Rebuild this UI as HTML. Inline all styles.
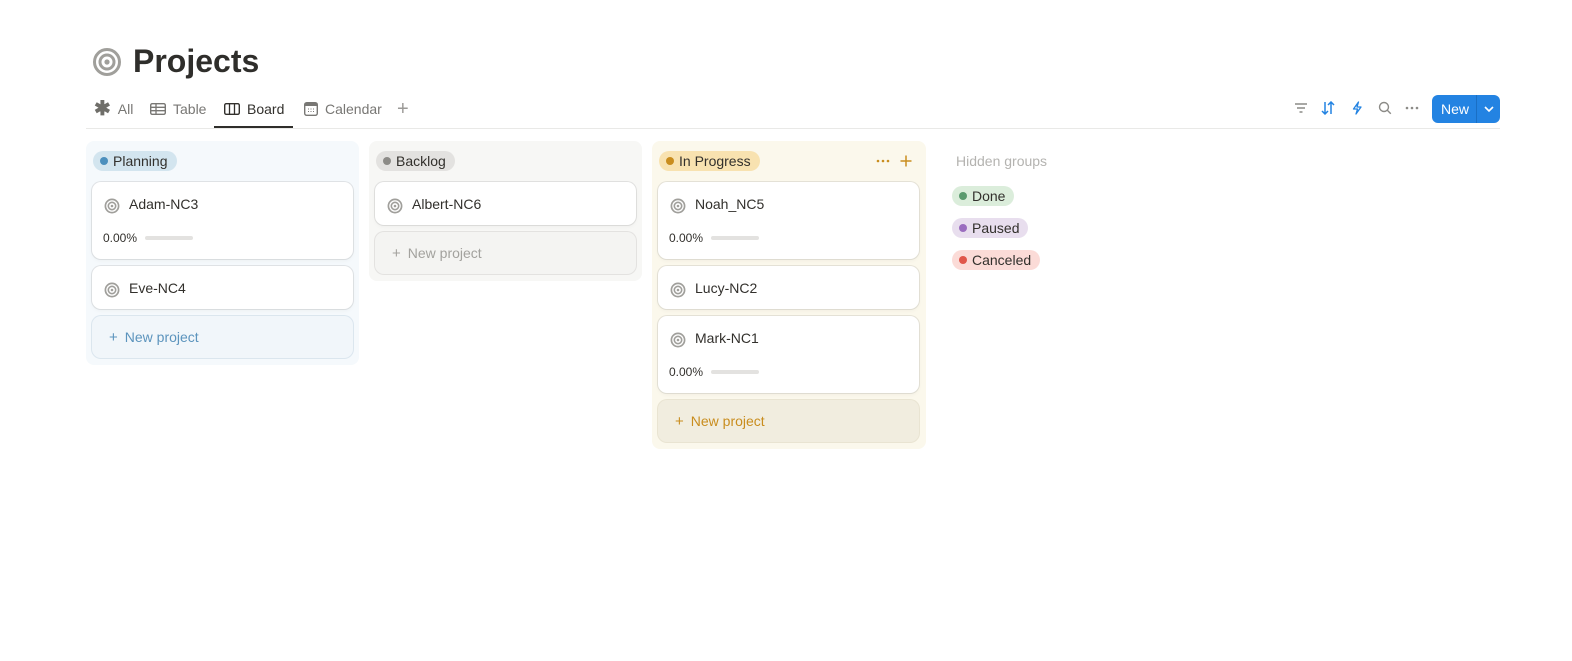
<!DOCTYPE html>
<html><head><meta charset="utf-8"><style>
*{box-sizing:border-box;margin:0;padding:0}
body{width:1572px;height:661px;background:#fff;font-family:"Liberation Sans",sans-serif;color:#37352f;position:relative;overflow:hidden}
.abs{position:absolute}
h1{position:absolute;left:133px;top:43px;font-size:32px;font-weight:700;color:#2f2e2b}
.tab{position:absolute;top:101px;font-size:14px;color:#787774;display:flex;align-items:center;gap:7px}
.col{position:absolute;border-radius:8px}
.pill{position:absolute;height:20px;border-radius:10px;font-size:14px;display:flex;align-items:center;padding:0 9px 0 7px;gap:5px;color:#32302c}
.pill i{width:8px;height:8px;border-radius:50%;display:block}
.card{position:absolute;background:#fff;border-radius:9px;box-shadow:0 0 0 1px rgba(15,15,15,.09),0 2px 4px rgba(15,15,15,.04);width:261px}
.card .t{position:absolute;left:37px;top:14px;font-size:14px;color:#32302c}
.card svg{position:absolute;left:12px;top:16px}
.pct{position:absolute;left:11px;font-size:12px;color:#32302c;display:flex;align-items:center;gap:8px}
.pct b{display:block;width:48px;height:4px;border-radius:2px;background:#e3e2e0}
.newp{position:absolute;width:261px;height:42px;border-radius:9px;font-size:14px;display:flex;align-items:center;padding-left:17px;gap:7px}
.newp span{font-size:15px}
</style></head><body>
<svg class="abs" style="left:92px;top:47px" width="30" height="30" viewBox="0 0 30 30"><circle cx="15" cy="15" r="12.5" fill="none" stroke="#a09f9b" stroke-width="3"/><circle cx="15" cy="15" r="7" fill="none" stroke="#a09f9b" stroke-width="3"/><circle cx="15" cy="15" r="2.6" fill="#a09f9b"/></svg>
<h1>Projects</h1>
<div class="tab" style="left:94px"><span style="font-size:20px;color:#6f6e69;font-weight:700;line-height:14px">✱</span>All</div>
<div class="tab" style="left:150px"><svg width="16" height="12" viewBox="0 0 16 12"><rect x="0.7" y="0.7" width="14.6" height="10.6" rx="1.5" fill="none" stroke="#787774" stroke-width="1.4"/><path d="M1 4.3h14M1 7.7h14M6 1v10" stroke="#787774" stroke-width="1.3"/></svg>Table</div>
<div class="tab" style="left:224px;color:#32302c"><svg width="16" height="12" viewBox="0 0 16 12"><rect x="0.7" y="0.7" width="14.6" height="10.6" rx="1.5" fill="none" stroke="#32302c" stroke-width="1.4"/><path d="M5.5 1v10M10.5 1v10" stroke="#32302c" stroke-width="1.3"/></svg>Board</div>
<div class="abs" style="left:214px;top:126px;width:79px;height:2px;background:#2f2e2b"></div>
<div class="tab" style="left:304px"><svg width="14" height="14" viewBox="0 0 14 14"><rect x="0.7" y="0.7" width="12.6" height="12.6" rx="2" fill="none" stroke="#787774" stroke-width="1.4"/><rect x="1" y="1" width="12" height="3" fill="#787774"/><path d="M4 7h1M6.5 7h1M9 7h1M4 9.5h1M6.5 9.5h1M9 9.5h1" stroke="#787774" stroke-width="1"/></svg>Calendar</div>
<div class="tab" style="left:397px;font-size:20px;top:98px;color:#9b9a97">+</div>
<div class="abs" style="left:86px;top:128px;width:1414px;height:1px;background:#e9e9e7"></div>
<svg class="abs" style="left:1294px;top:102px" width="14" height="12" viewBox="0 0 14 12"><path d="M1 2h12M3 6h8M5.5 10h3" stroke="#8c8b87" stroke-width="1.4"/></svg>
<svg class="abs" style="left:1321px;top:101px" width="14" height="14" viewBox="0 0 14 14"><path d="M4 1v12M1 10l3 3 3-3M10 13V1M7 4l3-3 3 3" stroke="#2383e2" stroke-width="1.5" fill="none"/></svg>
<svg class="abs" style="left:1351px;top:101px" width="12" height="14" viewBox="0 0 12 14"><path d="M7.5 1L2.5 8h4l-1.5 5 5-7h-4z" stroke="#2383e2" stroke-width="1.3" fill="none" stroke-linejoin="round"/></svg>
<svg class="abs" style="left:1378px;top:101px" width="14" height="14" viewBox="0 0 14 14"><circle cx="6" cy="6" r="4.5" stroke="#8c8b87" stroke-width="1.4" fill="none"/><path d="M9.3 9.3l3.5 3.5" stroke="#8c8b87" stroke-width="1.4"/></svg>
<svg class="abs" style="left:1405px;top:106px" width="14" height="4" viewBox="0 0 14 4"><circle cx="2" cy="2" r="1.3" fill="#8c8b87"/><circle cx="7" cy="2" r="1.3" fill="#8c8b87"/><circle cx="12" cy="2" r="1.3" fill="#8c8b87"/></svg>
<div class="abs" style="left:1432px;top:95px;width:68px;height:28px;background:#2383e2;border-radius:6px;color:#fff;font-size:14px;display:flex;align-items:center"><span style="padding-left:9px;width:44px">New</span><span style="width:1px;height:28px;background:#1a6fc4"></span><svg style="margin-left:6px" width="12" height="8" viewBox="0 0 12 8"><path d="M2 2l4 4 4-4" stroke="#fff" stroke-width="1.6" fill="none"/></svg></div>

<div class="col" style="left:86px;top:141px;width:273px;height:224px;background:#f5f9fc"></div>
<div class="pill" style="left:93px;top:151px;background:#d3e5ef"><i style="background:#4c8fbd"></i>Planning</div>
<div class="card" style="left:92px;top:182px;height:77px"><svg width="16" height="16" viewBox="0 0 16 16"><circle cx="8" cy="8" r="6.6" fill="none" stroke="#a09f9b" stroke-width="1.7"/><circle cx="8" cy="8" r="3.7" fill="none" stroke="#a09f9b" stroke-width="1.6"/><circle cx="8" cy="8" r="1.3" fill="#a09f9b"/></svg><div class="t">Adam-NC3</div><div class="pct" style="top:49px">0.00%<b></b></div></div>
<div class="card" style="left:92px;top:266px;height:43px"><svg width="16" height="16" viewBox="0 0 16 16"><circle cx="8" cy="8" r="6.6" fill="none" stroke="#a09f9b" stroke-width="1.7"/><circle cx="8" cy="8" r="3.7" fill="none" stroke="#a09f9b" stroke-width="1.6"/><circle cx="8" cy="8" r="1.3" fill="#a09f9b"/></svg><div class="t">Eve-NC4</div></div>
<div class="newp" style="left:92px;top:316px;background:#f1f6fa;box-shadow:0 0 0 1px #dbe6ee;color:#5c94bd"><span>+</span>New project</div>

<div class="col" style="left:369px;top:141px;width:273px;height:140px;background:#f7f7f5"></div>
<div class="pill" style="left:376px;top:151px;background:#e3e2e0"><i style="background:#8c8b87"></i>Backlog</div>
<div class="card" style="left:375px;top:182px;height:43px"><svg width="16" height="16" viewBox="0 0 16 16"><circle cx="8" cy="8" r="6.6" fill="none" stroke="#a09f9b" stroke-width="1.7"/><circle cx="8" cy="8" r="3.7" fill="none" stroke="#a09f9b" stroke-width="1.6"/><circle cx="8" cy="8" r="1.3" fill="#a09f9b"/></svg><div class="t">Albert-NC6</div></div>
<div class="newp" style="left:375px;top:232px;background:#f4f4f2;box-shadow:0 0 0 1px #e3e2e0;color:#a3a29e"><span>+</span>New project</div>

<div class="col" style="left:652px;top:141px;width:274px;height:308px;background:#fbf8ec"></div>
<div class="pill" style="left:659px;top:151px;background:#f8e2b0"><i style="background:#c98d1e"></i>In Progress</div>
<svg class="abs" style="left:876px;top:159px" width="14" height="4" viewBox="0 0 14 4"><circle cx="2" cy="2" r="1.3" fill="#c98d1e"/><circle cx="7" cy="2" r="1.3" fill="#c98d1e"/><circle cx="12" cy="2" r="1.3" fill="#c98d1e"/></svg>
<svg class="abs" style="left:900px;top:155px" width="12" height="12" viewBox="0 0 12 12"><path d="M6 0.5v11M0.5 6h11" stroke="#c98d1e" stroke-width="1.5"/></svg>
<div class="card" style="left:658px;top:182px;height:77px"><svg width="16" height="16" viewBox="0 0 16 16"><circle cx="8" cy="8" r="6.6" fill="none" stroke="#a09f9b" stroke-width="1.7"/><circle cx="8" cy="8" r="3.7" fill="none" stroke="#a09f9b" stroke-width="1.6"/><circle cx="8" cy="8" r="1.3" fill="#a09f9b"/></svg><div class="t">Noah_NC5</div><div class="pct" style="top:49px">0.00%<b></b></div></div>
<div class="card" style="left:658px;top:266px;height:43px"><svg width="16" height="16" viewBox="0 0 16 16"><circle cx="8" cy="8" r="6.6" fill="none" stroke="#a09f9b" stroke-width="1.7"/><circle cx="8" cy="8" r="3.7" fill="none" stroke="#a09f9b" stroke-width="1.6"/><circle cx="8" cy="8" r="1.3" fill="#a09f9b"/></svg><div class="t">Lucy-NC2</div></div>
<div class="card" style="left:658px;top:316px;height:77px"><svg width="16" height="16" viewBox="0 0 16 16"><circle cx="8" cy="8" r="6.6" fill="none" stroke="#a09f9b" stroke-width="1.7"/><circle cx="8" cy="8" r="3.7" fill="none" stroke="#a09f9b" stroke-width="1.6"/><circle cx="8" cy="8" r="1.3" fill="#a09f9b"/></svg><div class="t">Mark-NC1</div><div class="pct" style="top:49px">0.00%<b></b></div></div>
<div class="newp" style="left:658px;top:400px;background:#f1eddf;box-shadow:0 0 0 1px #e9e4d2;color:#c98d1e"><span>+</span>New project</div>

<div class="abs" style="left:956px;top:153px;font-size:14px;color:#b4b3b0">Hidden groups</div>
<div class="pill" style="left:952px;top:186px;background:#dbeddb"><i style="background:#5a9a6e"></i>Done</div>
<div class="pill" style="left:952px;top:218px;background:#e8deee"><i style="background:#9a6dbf"></i>Paused</div>
<div class="pill" style="left:952px;top:250px;background:#fbdbd7"><i style="background:#e0564a"></i>Canceled</div>
</body></html>
